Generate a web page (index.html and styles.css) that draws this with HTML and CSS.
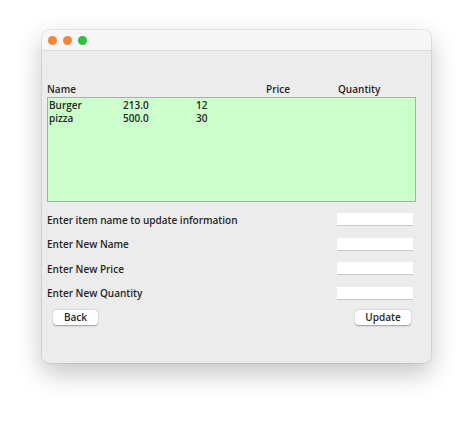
FILE: index.html
```html
<!DOCTYPE html>
<html>
<head>
<meta charset="utf-8">
<link rel="stylesheet" href="styles.css">
</head>
<body>
<div class="window">
  <div class="titlebar">
    <span class="light orange"></span>
    <span class="light orange"></span>
    <span class="light green"></span>
  </div>
  <div class="content">
    <div class="thead">
      <span class="h-name">Name</span>
      <span class="h-price">Price</span>
      <span class="h-qty">Quantity</span>
    </div>
    <div class="list">
      <div class="row"><span class="c1">Burger</span><span class="c2">213.0</span><span class="c3">12</span></div>
      <div class="row"><span class="c1">pizza</span><span class="c2">500.0</span><span class="c3">30</span></div>
    </div>
    <div class="form">
      <div class="frow"><span>Enter item name to update information</span><span class="field"></span></div>
      <div class="frow"><span>Enter New Name</span><span class="field"></span></div>
      <div class="frow"><span>Enter New Price</span><span class="field"></span></div>
      <div class="frow"><span>Enter New Quantity</span><span class="field"></span></div>
    </div>
    <div class="buttons">
      <span class="btn back">Back</span>
      <span class="btn update">Update</span>
    </div>
  </div>
</div>
</body>
</html>
```

FILE: styles.css
```css
html, body {
  margin: 0;
  padding: 0;
  background: #ffffff;
}
body {
  font-family: "Open Sans", "Liberation Sans", sans-serif;
  font-size: 10px;
  color: #262626;
  width: 474px;
  height: 421px;
  overflow: hidden;
}
.window {
  margin: 30px 0 0 42px;
  width: 389px;
  height: 333px;
  background: #ececec;
  border-radius: 7px;
  box-shadow: 0 10px 26px rgba(0,0,0,0.24), 0 0 0 1px rgba(0,0,0,0.07);
  display: flex;
  flex-direction: column;
  overflow: hidden;
}
.titlebar {
  height: 20px;
  background: #f6f6f6;
  border-bottom: 1px solid #dcdcdc;
  display: flex;
  align-items: center;
  gap: 6px;
  padding-left: 6px;
  flex: none;
}
.light {
  width: 9px;
  height: 9px;
  border-radius: 50%;
  display: block;
}
.orange { background: #f5873b; }
.green { background: #2cc040; }
.content {
  padding: 32px 15px 0 5px;
  display: flex;
  flex-direction: column;
}
.thead {
  position: relative;
  height: 13px;
  line-height: 13px;
  font-weight: 600;
}
.h-name { position: absolute; left: 0; }
.h-price { position: absolute; left: 219px; }
.h-qty { position: absolute; left: 291px; }
.list {
  margin-top: 1px;
  height: 102px;
  background: #ccffcc;
  border: 1px solid #a9b0a9;
  padding: 1px 0 0 1px;
}
.row {
  display: flex;
  height: 12.5px;
  line-height: 12.5px;
  font-weight: 600;
}
.c1 { width: 74px; }
.c2 { width: 73px; }
.form {
  margin-top: 11px;
  display: flex;
  flex-direction: column;
  gap: 11px;
  padding-right: 3px;
}
.frow {
  display: flex;
  justify-content: space-between;
  align-items: center;
  height: 13.5px;
  font-weight: 600;
}
.field {
  width: 76px;
  height: 13px;
  background: #ffffff;
  border-bottom: 1px solid #c8c8c8;
  box-sizing: border-box;
}
.buttons {
  margin-top: 10px;
  display: flex;
  justify-content: space-between;
  padding: 0 5px 0 6px;
}
.btn {
  height: 15px;
  line-height: 15px;
  background: #ffffff;
  border-radius: 4px;
  box-shadow: 0 0.5px 1.5px rgba(0,0,0,0.35);
  text-align: center;
  font-weight: 600;
}
.back { width: 45px; }
.update { width: 56px; }
```
